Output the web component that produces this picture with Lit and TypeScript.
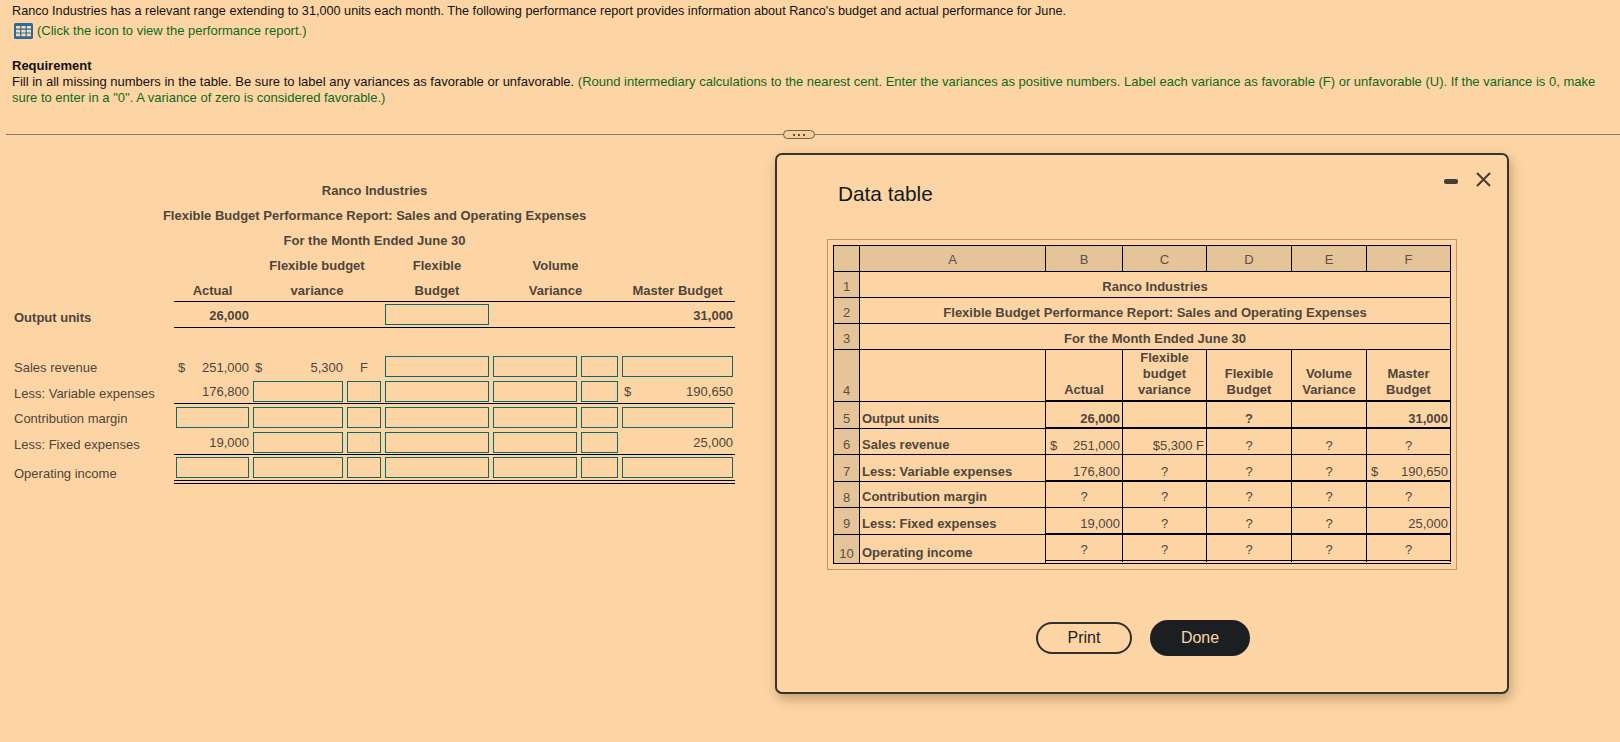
import { LitElement, html, css } from "lit";
import { customElement } from "lit/decorators.js";

type Cell = { t?: string; d?: string; cls?: string };
type SheetRow = { n: string; nCls: string; a: string; rowCls: string; labCls: string; cells: Cell[] };

const q = (cls: string): Cell => ({ t: "?", cls: `mid ${cls}` });
const v = (t: string, cls: string, d?: string): Cell => ({ t, d, cls: `num ${cls}` });

const sheetRows: SheetRow[] = [
  { n: "5", nCls: "p8", a: "Output units", rowCls: "r5", labCls: "p7", cells: [v("26,000", "p8 bold"), {}, q("p8 bold"), {}, v("31,000", "p8 bold")] },
  { n: "6", nCls: "p6", a: "Sales revenue", rowCls: "r6", labCls: "p6", cells: [v("251,000", "p8", "$"), v("$5,300 F", "p8"), q("p8"), q("p8"), q("p8")] },
  { n: "7", nCls: "p8", a: "Less: Variable expenses", rowCls: "r7", labCls: "p7", cells: [v("176,800", "p8"), q("p8"), q("p8"), q("p8"), v("190,650", "p8", "$")] },
  { n: "8", nCls: "p6", a: "Contribution margin", rowCls: "r8", labCls: "p4", cells: [q("p4"), q("p4"), q("p4"), q("p4"), q("p4")] },
  { n: "9", nCls: "p6", a: "Less: Fixed expenses", rowCls: "r9", labCls: "p5", cells: [v("19,000", "p6"), q("p6"), q("p6"), q("p6"), v("25,000", "p6")] },
  { n: "10", nCls: "p9", a: "Operating income", rowCls: "r10", labCls: "p7", cells: [q("p4"), q("p4"), q("p4"), q("p4"), q("p4")] },
];

@customElement("app-root")
export class AppRoot extends LitElement {
  static styles = css`
    :host {
      display: block;
      position: relative;
      width: 1620px;
      height: 742px;
      overflow: hidden;
      background: #fdd5a5;
      font-family: "Liberation Sans", Arial, sans-serif;
      color: #111;
    }
    .intro { padding: 3px 0 0 12px; font-size: 13px; line-height: 16px; width: 1600px; box-sizing: border-box; }
    .lead { font-size: 12.66px; }
    .line2 { display: flex; align-items: center; gap: 4px; margin-top: 4px; height: 16px; padding-left: 2px; }
    .green { color: #0b6a1e; }
    .req { margin-top: 19px; }
    .req b { display: block; font-weight: 700; }
    .divider { position: relative; height: 1px; margin: 28px 0 0 6px; background: #7d7a70; }
    .pill {
      position: absolute; left: 777px; top: -4px; box-sizing: border-box; width: 32px; height: 9px;
      border: 1px solid #66625a; border-radius: 5px; background: #f6cc9a;
      display: flex; align-items: center; justify-content: center; gap: 3px;
    }
    .pill i { width: 2px; height: 2px; background: #55524c; }

    table { border-spacing: 0; border-collapse: separate; table-layout: fixed; }
    td { box-sizing: border-box; padding: 0; white-space: nowrap; vertical-align: middle; line-height: 12px; }

    .report { margin: 42px 0 0 14px; width: 721px; font-size: 13px; color: #4d453b; }
    .w0 { width: 160px; } .w1 { width: 77px; } .w2 { width: 94px; } .w3 { width: 38px; }
    .w4 { width: 108px; } .w5 { width: 88px; } .w6 { width: 41px; } .w7 { width: 115px; }
    .report .h td { height: 25px; }
    .report .blank td { height: 26px; }
    .report .ro td { height: 26px; }
    .report .r25 td { height: 25px; }
    .report .rop td { height: 29px; }
    .c { text-align: center; }
    .report .b, .bold { font-weight: 700; }
    .rt { text-align: right; padding-right: 2px; }
    .split { display: flex; justify-content: space-between; padding: 0 2px 0 4px; }
    .rule { border-bottom: 1px solid #000; }
    .drule { border-bottom: 4px double #000; }
    .field { display: block; box-sizing: border-box; height: 21px; border: 1px solid #0b6a68; margin: 0 2px; }
    .p2 { padding-top: 2px; } .p4 { padding-top: 4px; } .p5 { padding-top: 5px; } .p6 { padding-top: 6px; } .p7 { padding-top: 7px; } .p8 { padding-top: 8px; } .p9 { padding-top: 9px; }

    .modal {
      position: absolute; left: 775px; top: 153px; box-sizing: border-box; width: 734px; height: 541px;
      border: 2px solid #3a3328; border-radius: 7px; background: #fdd5a5;
      box-shadow: 2px 5px 12px rgba(90, 60, 20, 0.35);
    }
    .mhead { box-sizing: border-box; height: 84px; display: flex; justify-content: space-between; align-items: flex-start; padding: 17px 16px 0 61px; }
    .mhead h2 { margin: 10px 0 0; font-size: 20.8px; font-weight: 400; line-height: 24px; color: #10191f; }
    .wbtns { display: flex; align-items: center; gap: 18px; }
    .mini { width: 14px; height: 5px; background: #443d33; border-radius: 2px; margin-top: 3px; }
    .x { display: block; }
    .frame { box-sizing: border-box; width: 630px; height: 331px; margin-left: 50px; border: 1px solid #b8996e; padding: 5px; }

    .sheet { width: 618px; font-size: 13px; color: #4f463c; }
    .n0 { width: 27px; } .n1 { width: 186px; } .n2 { width: 77px; } .n3 { width: 84px; } .n4 { width: 85px; } .n5 { width: 75px; } .n6 { width: 84px; }
    .sheet td { border-right: 1px solid #000; border-bottom: 1px solid #000; }
    .sheet tr:first-child td { border-top: 1px solid #000; }
    .sheet td:first-child { border-left: 1px solid #000; }
    .hd { background: #e5c49a; text-align: center; color: #5a5147; }
    .sheet .lab { font-weight: 700; padding-left: 2px; }
    .title { text-align: center; font-weight: 700; }
    .sheet .colh { font-weight: 700; text-align: center; vertical-align: bottom; line-height: 16px; white-space: normal; padding-bottom: 2px; }
    .sheet .no { vertical-align: bottom; line-height: 16px; padding-bottom: 2px; }
    .sheet .r0 td { height: 27px; }
    .sheet .r1 td { height: 26px; }
    .sheet .r4 td { height: 52px; }
    .sheet .r4 .v, .sheet .r5 .v, .sheet .r7 .v, .sheet .r9 .v { border-bottom-width: 2px; }
    .sheet .r5 td { height: 27px; }
    .sheet .r6 td, .sheet .r8 td { height: 26px; }
    .sheet .r7 td, .sheet .r9 td { height: 27px; }
    .sheet .r10 td { height: 29px; }
    .sheet .r10 .v { border-bottom: 4px double #000; }
    .sheet .num { text-align: right; padding-right: 2px; }
    .sheet .mid { text-align: center; }
    .sheet .num .split { padding: 0 0 0 4px; }

    .actions { display: flex; justify-content: center; align-items: center; gap: 18px; margin-top: 50px; padding-left: 2px; }
    .btn { box-sizing: border-box; font: 16px "Liberation Sans", Arial, sans-serif; padding: 0; display: flex; align-items: center; justify-content: center; }
    .print { width: 96px; height: 32px; border: 2px solid #2f2f2f; border-radius: 16px; background: transparent; color: #222; }
    .done { width: 100px; height: 36px; border: 0; border-radius: 18px; background: #1c1f22; color: #fdd5a5; }
  `;

  private sheetCell(c: Cell) {
    const body = c.d
      ? html`<div class="split"><span>${c.d}</span><span>${c.t}</span></div>`
      : c.t ?? "";
    return html`<td class="v ${c.cls ?? ""}">${body}</td>`;
  }

  private renderReport() {
    const f = html`<span class="field"></span>`;
    const inputs = (n: number) => Array.from({ length: n }, () => html`<td class="rule">${f}</td>`);
    const dinputs = (n: number) => Array.from({ length: n }, () => html`<td class="drule">${f}</td>`);
    return html`
      <table class="report">
        <colgroup>
          <col class="w0" /><col class="w1" /><col class="w2" /><col class="w3" /><col class="w4" /><col class="w5" /><col class="w6" /><col class="w7" />
        </colgroup>
        <tr class="h"><td colspan="8" class="c b p2">Ranco Industries</td></tr>
        <tr class="h"><td colspan="8" class="c b p2">Flexible Budget Performance Report: Sales and Operating Expenses</td></tr>
        <tr class="h"><td colspan="8" class="c b p2">For the Month Ended June 30</td></tr>
        <tr class="h">
          <td></td><td></td>
          <td colspan="2" class="c b p2">Flexible budget</td>
          <td class="c b p2">Flexible</td>
          <td colspan="2" class="c b p2">Volume</td>
          <td></td>
        </tr>
        <tr class="h">
          <td></td>
          <td class="c b rule p4">Actual</td>
          <td colspan="2" class="c b rule p4">variance</td>
          <td class="c b rule p4">Budget</td>
          <td colspan="2" class="c b rule p4">Variance</td>
          <td class="c b rule p4">Master Budget</td>
        </tr>
        <tr class="ro">
          <td class="b p5">Output units</td>
          <td class="rule rt b p2">26,000</td>
          <td class="rule"></td><td class="rule"></td>
          <td class="rule">${f}</td>
          <td class="rule"></td><td class="rule"></td>
          <td class="rule rt b p2">31,000</td>
        </tr>
        <tr class="blank"><td colspan="8"></td></tr>
        <tr class="r25">
          <td class="p2">Sales revenue</td>
          <td class="p2"><div class="split"><span>$</span><span>251,000</span></div></td>
          <td class="p2"><div class="split"><span>$</span><span>5,300</span></div></td>
          <td class="c p2">F</td>
          ${[f, f, f, f].map((x) => html`<td>${x}</td>`)}
        </tr>
        <tr class="r25">
          <td class="p4">Less: Variable expenses</td>
          <td class="rule rt p2">176,800</td>
          ${inputs(5)}
          <td class="rule p2"><div class="split"><span>$</span><span>190,650</span></div></td>
        </tr>
        <tr class="ro">
          <td class="p4">Contribution margin</td>
          <td>${f}</td><td>${f}</td><td>${f}</td><td>${f}</td><td>${f}</td><td>${f}</td><td>${f}</td>
        </tr>
        <tr class="r25">
          <td class="p4">Less: Fixed expenses</td>
          <td class="rule rt p2">19,000</td>
          ${inputs(5)}
          <td class="rule rt p2">25,000</td>
        </tr>
        <tr class="rop">
          <td class="p9">Operating income</td>
          ${dinputs(7)}
        </tr>
      </table>
    `;
  }

  private renderSheet() {
    return html`
      <table class="sheet">
        <colgroup>
          <col class="n0" /><col class="n1" /><col class="n2" /><col class="n3" /><col class="n4" /><col class="n5" /><col class="n6" />
        </colgroup>
        <tr class="r0">
          <td class="hd"></td>
          ${["A", "B", "C", "D", "E", "F"].map((l) => html`<td class="hd p2">${l}</td>`)}
        </tr>
        <tr class="r1"><td class="hd p4">1</td><td colspan="6" class="title p4">Ranco Industries</td></tr>
        <tr class="r1"><td class="hd p4">2</td><td colspan="6" class="title p4">Flexible Budget Performance Report: Sales and Operating Expenses</td></tr>
        <tr class="r1"><td class="hd p4">3</td><td colspan="6" class="title p4">For the Month Ended June 30</td></tr>
        <tr class="r4">
          <td class="hd no">4</td>
          <td></td>
          <td class="v colh">Actual</td>
          <td class="v colh">Flexible budget variance</td>
          <td class="v colh">Flexible<br />Budget</td>
          <td class="v colh">Volume<br />Variance</td>
          <td class="v colh">Master<br />Budget</td>
        </tr>
        ${sheetRows.map(
          (r) => html`<tr class=${r.rowCls}>
            <td class="hd ${r.nCls}">${r.n}</td>
            <td class="lab ${r.labCls}">${r.a}</td>
            ${r.cells.map((c) => this.sheetCell(c))}
          </tr>`
        )}
      </table>
    `;
  }

  render() {
    return html`
      <div class="intro">
        <div class="lead">Ranco Industries has a relevant range extending to 31,000 units each month. The following performance report provides information about Ranco's budget and actual performance for June.</div>
        <div class="line2">
          <svg width="19" height="16" viewBox="0 0 19 16" aria-hidden="true">
            <rect width="19" height="16" rx="1.5" fill="#2b6a9b"></rect>
            <path d="M2 3h4.2v2.6H2zM7.4 3h4.2v2.6H7.4zM12.8 3H17v2.6h-4.2zM2 6.8h4.2v2.6H2zM7.4 6.8h4.2v2.6H7.4zM12.8 6.8H17v2.6h-4.2zM2 10.6h4.2v2.6H2zM7.4 10.6h4.2v2.6H7.4zM12.8 10.6H17v2.6h-4.2z" fill="#f6dcb5"></path>
          </svg>
          <span class="green">(Click the icon to view the performance report.)</span>
        </div>
        <div class="req">
          <b>Requirement</b>
          <div>Fill in all missing numbers in the table. Be sure to label any variances as favorable or unfavorable. <span class="green">(Round intermediary calculations to the nearest cent. Enter the variances as positive numbers. Label each variance as favorable (F) or unfavorable (U). If the variance is 0, make sure to enter in a "0". A variance of zero is considered favorable.)</span></div>
        </div>
      </div>
      <div class="divider"><div class="pill"><i></i><i></i><i></i></div></div>
      ${this.renderReport()}
      <div class="modal">
        <div class="mhead">
          <h2>Data table</h2>
          <div class="wbtns">
            <div class="mini"></div>
            <svg class="x" width="15" height="15" viewBox="0 0 15 15" aria-hidden="true">
              <path d="M1 1l13 13M14 1L1 14" stroke="#443d33" stroke-width="2" fill="none"></path>
            </svg>
          </div>
        </div>
        <div class="frame">${this.renderSheet()}</div>
        <div class="actions">
          <button class="btn print">Print</button>
          <button class="btn done">Done</button>
        </div>
      </div>
    `;
  }
}
